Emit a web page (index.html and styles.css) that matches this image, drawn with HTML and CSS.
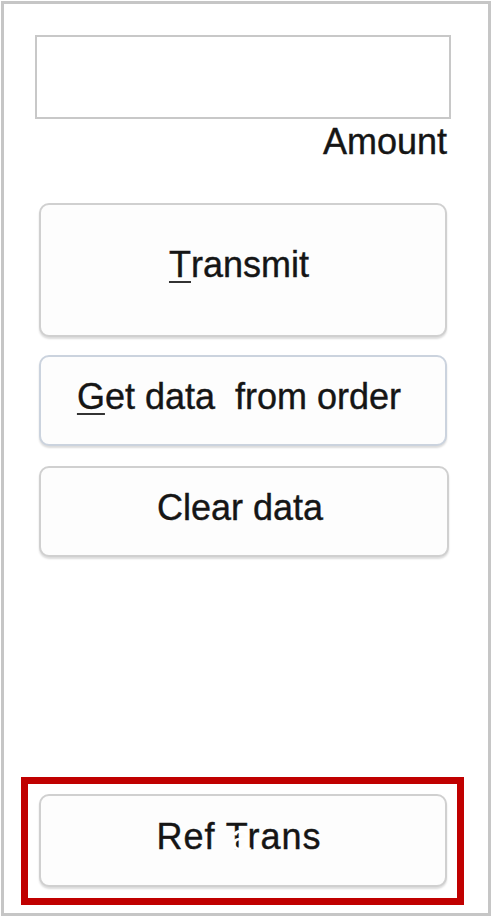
FILE: index.html
```html
<!DOCTYPE html>
<html lang="en">

<head>
    <meta charset="UTF-8">
    <meta name="viewport" content="width=device-width, initial-scale=1.0">
    <title>Payment Panel</title>
    <link rel="stylesheet" href="styles.css">
</head>

<body>
    <div class="panel">
        <div class="field">
            <input type="text" id="amount" class="field-input">
            <label for="amount" class="field-label">Amount</label>
        </div>

        <div class="actions">
            <button type="button" class="btn btn-tall"><u>T</u>ransmit</button>
            <button type="button" class="btn btn-focus"><u>G</u>et data&nbsp; from order</button>
            <button type="button" class="btn btn-wide">Clear data</button>
        </div>

        <!-- highlighted area -->
        <div class="highlight">
            <button type="button" class="btn btn-ref">Ref Trans<span class="mark">a</span></button>
        </div>
    </div>
</body>

</html>
```

FILE: styles.css
```css
/* General Reset */
* {
    margin: 0;
    padding: 0;
    box-sizing: border-box;
    font-family: 'Liberation Sans', Arial, sans-serif;
}

body {
    margin: 1px;
    background: #fff;
    color: #151515;
}

/* Outer panel */
.panel {
    width: 490px;
    height: 915px;
    border: 3px solid #c6c6c6;
    background: #fff;
    padding: 31px 24px 8px 17px;
    display: flex;
    flex-direction: column;
}

/* Amount field */
.field {
    margin: 0 13px 0 14px;
    display: flex;
    flex-direction: column;
}

.field-input {
    height: 84px;
    border: 2px solid #c8c8c8;
    background: #fff;
    outline: none;
}

.field-label {
    margin-top: 3px;
    padding-right: 4px;
    text-align: right;
    font-size: 36px;
    line-height: 40px;
    -webkit-text-stroke: 0.4px currentColor;
}

/* Buttons */
.actions {
    margin: 41px 17px 0 18px;
    display: flex;
    flex-direction: column;
    gap: 18px;
}

.btn {
    position: relative;
    width: 408px;
    height: 91px;
    border: 2px solid #d0d0d0;
    border-radius: 10px;
    background: #fdfdfd;
    box-shadow: 0 2px 2px rgba(0, 0, 0, 0.14);
    color: #151515;
    font-size: 36px;
    line-height: 36px;
    padding: 0 8px 8px 0;
    display: flex;
    justify-content: center;
    align-items: center;
    -webkit-text-stroke: 0.4px currentColor;
}

.btn u {
    text-decoration-thickness: 2px;
    text-underline-offset: 4px;
    text-decoration-color: #333;
}

.btn-tall {
    height: 134px;
    padding-bottom: 10px;
}

.btn-focus {
    border-color: #cbd3de;
}

.btn-wide {
    width: 410px;
    margin-top: 2px;
}

/* Red highlight frame */
.highlight {
    margin-top: auto;
    border: 7px solid #c00000;
    padding: 10px 10px 11px 11px;
}

.btn-ref {
    height: 93px;
    letter-spacing: 1px;
}

.mark {
    position: absolute;
    left: 190px;
    top: 24px;
    color: #fff;
    letter-spacing: 0;
    -webkit-text-stroke: 0;
}
```
